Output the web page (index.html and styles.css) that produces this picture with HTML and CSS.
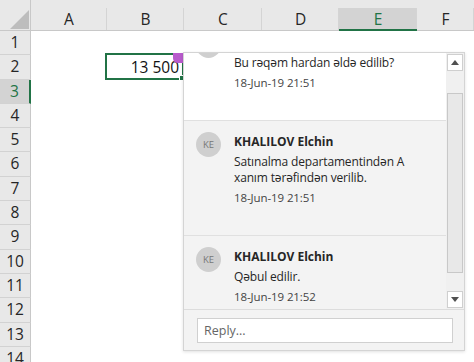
FILE: index.html
```html
<!DOCTYPE html>
<html lang="az">
<head>
<meta charset="UTF-8">
<title>Sheet comments</title>
<link rel="stylesheet" href="styles.css">
</head>
<body>

<div class="sheet">
    <div class="corner">
        <svg width="31" height="31" viewBox="0 0 31 31"><polygon points="29,10 29,29 10,29" fill="#bdbdbd"/></svg>
    </div>
    <div class="colhead">A</div>
    <div class="colhead">B</div>
    <div class="colhead">C</div>
    <div class="colhead">D</div>
    <div class="colhead active">E</div>
    <div class="colhead">F</div>

    <div class="rowhead">1</div><div class="cell"></div><div class="cell"></div><div class="cell"></div><div class="cell"></div><div class="cell"></div><div class="cell"></div>
    <div class="rowhead">2</div><div class="cell"></div><div class="cell value">13 500</div><div class="cell"></div><div class="cell"></div><div class="cell"></div><div class="cell"></div>
    <div class="rowhead active">3</div><div class="cell"></div><div class="cell"></div><div class="cell"></div><div class="cell"></div><div class="cell"></div><div class="cell"></div>
    <div class="rowhead">4</div><div class="cell"></div><div class="cell"></div><div class="cell"></div><div class="cell"></div><div class="cell"></div><div class="cell"></div>
    <div class="rowhead">5</div><div class="cell"></div><div class="cell"></div><div class="cell"></div><div class="cell"></div><div class="cell"></div><div class="cell"></div>
    <div class="rowhead">6</div><div class="cell"></div><div class="cell"></div><div class="cell"></div><div class="cell"></div><div class="cell"></div><div class="cell"></div>
    <div class="rowhead">7</div><div class="cell"></div><div class="cell"></div><div class="cell"></div><div class="cell"></div><div class="cell"></div><div class="cell"></div>
    <div class="rowhead">8</div><div class="cell"></div><div class="cell"></div><div class="cell"></div><div class="cell"></div><div class="cell"></div><div class="cell"></div>
    <div class="rowhead">9</div><div class="cell"></div><div class="cell"></div><div class="cell"></div><div class="cell"></div><div class="cell"></div><div class="cell"></div>
    <div class="rowhead">10</div><div class="cell"></div><div class="cell"></div><div class="cell"></div><div class="cell"></div><div class="cell"></div><div class="cell"></div>
    <div class="rowhead">11</div><div class="cell"></div><div class="cell"></div><div class="cell"></div><div class="cell"></div><div class="cell"></div><div class="cell"></div>
    <div class="rowhead">12</div><div class="cell"></div><div class="cell"></div><div class="cell"></div><div class="cell"></div><div class="cell"></div><div class="cell"></div>
    <div class="rowhead">13</div><div class="cell"></div><div class="cell"></div><div class="cell"></div><div class="cell"></div><div class="cell"></div><div class="cell"></div>
    <div class="rowhead">14</div><div class="cell"></div><div class="cell"></div><div class="cell"></div><div class="cell"></div><div class="cell"></div><div class="cell"></div>

    <!-- selected cell B2 -->
    <div class="selection"><span class="fill-handle"></span></div>
    <svg class="comment-flag" width="10" height="10" viewBox="0 0 10 10"><path d="M0 0 H10 V10 H5 Q0 10 0 5 Z" fill="#b85bcc"/></svg>

    <!-- threaded comment card -->
    <div class="thread">
        <div class="thread-body">
            <div class="comment-list">
                <div class="comment first">
                    <div class="avatar">KE</div>
                    <div class="comment-text">
                        <div class="author">KHALILOV Elchin</div>
                        <div class="message">Bu rəqəm hardan əldə edilib?</div>
                        <div class="date">18-Jun-19 21:51</div>
                    </div>
                </div>
                <div class="comment">
                    <div class="avatar">KE</div>
                    <div class="comment-text">
                        <div class="author">KHALILOV Elchin</div>
                        <div class="message">Satınalma departamentindən A<br>xanım tərəfindən verilib.</div>
                        <div class="date">18-Jun-19 21:51</div>
                    </div>
                </div>
                <div class="comment">
                    <div class="avatar">KE</div>
                    <div class="comment-text">
                        <div class="author">KHALILOV Elchin</div>
                        <div class="message">Qəbul edilir.</div>
                        <div class="date">18-Jun-19 21:52</div>
                    </div>
                </div>
            </div>
            <div class="scrollbar">
                <div class="scroll-btn">
                    <svg width="8" height="5" viewBox="0 0 8 5"><polygon points="4,0 8,5 0,5" fill="#505050"/></svg>
                </div>
                <div class="scroll-track"><div class="scroll-thumb"></div></div>
                <div class="scroll-btn">
                    <svg width="8" height="5" viewBox="0 0 8 5"><polygon points="0,0 8,0 4,5" fill="#505050"/></svg>
                </div>
            </div>
        </div>
        <div class="reply-bar">
            <input type="text" class="reply-input" placeholder="Reply...">
        </div>
    </div>
</div>

</body>
</html>
```

FILE: styles.css
```css
body {
    margin: 0;
    padding: 0;
    overflow: hidden;
    font-family: "Open Sans", "Noto Sans", sans-serif;
    color: #222;
    background: #fff;
}
.sheet {
    position: relative;
    display: grid;
    grid-template-columns: 31px 76px 77px 78px 77px 78px 57px;
    grid-template-rows: 31px repeat(14, 24.3px);
    width: 474px;
}
.corner {
    background: #e8e8e8;
    border-bottom: 1px solid #c8c8c8;
    border-right: 1px solid #c8c8c8;
    box-sizing: border-box;
    overflow: hidden;
}
.corner svg {
    display: block;
}
.colhead {
    background: #e8e8e8;
    border-top: 8px solid #e8e8e8;
    border-bottom: 1px solid #c8c8c8;
    box-shadow: inset -1px 0 0 #d4d4d4;
    box-sizing: border-box;
    font-size: 15.5px;
    line-height: 22px;
    text-align: center;
    color: #262626;
}
.colhead.active {
    background: #d3d3d3;
    border-bottom: 2px solid #217346;
    color: #217346;
}
.rowhead {
    background: #e8e8e8;
    border-bottom: 1px solid #d2d2d2;
    border-right: 1px solid #c8c8c8;
    box-sizing: border-box;
    font-size: 15.5px;
    line-height: 23px;
    text-align: center;
    color: #262626;
}
.rowhead.active {
    background: #d3d3d3;
    border-right: 2px solid #217346;
    color: #217346;
}
.cell {
    background: #fff;
}
.cell.value {
    font-size: 15.5px;
    line-height: 24px;
    text-align: right;
    padding-right: 5px;
    color: #111;
}
.selection {
    position: absolute;
    left: 105px;
    top: 53px;
    width: 79px;
    height: 27px;
    border: 2px solid #217346;
    box-sizing: border-box;
}
.fill-handle {
    position: absolute;
    right: -3px;
    bottom: -3px;
    width: 4px;
    height: 4px;
    background: #217346;
    border: 1px solid #fff;
}
.comment-flag {
    position: absolute;
    left: 173px;
    top: 53px;
}

/* comment card */
.thread {
    position: absolute;
    left: 183px;
    top: 52px;
    width: 282px;
    height: 299px;
    border: 1px solid #d4d4d4;
    box-sizing: border-box;
    background: #fff;
    box-shadow: 0 1px 3px rgba(0, 0, 0, 0.12);
    display: flex;
    flex-direction: column;
}
.thread-body {
    display: flex;
    height: 256px;
}
.comment-list {
    flex: 1;
    overflow: hidden;
}
.comment {
    display: flex;
    gap: 13px;
    padding: 11px 12px 28px 12px;
    background: #f3f3f3;
    border-bottom: 1px solid #e0e0e0;
}
.comment.first {
    margin-top: -31px;
    background: #fff;
}
.avatar {
    flex: none;
    width: 25px;
    height: 25px;
    border-radius: 50%;
    background: #cfcfcf;
    color: #777;
    font-size: 9.5px;
    line-height: 25px;
    text-align: center;
}
.author {
    font-size: 12px;
    font-weight: bold;
    line-height: 20px;
    color: #262626;
}
.message {
    margin-top: 2px;
    font-size: 12px;
    letter-spacing: -0.15px;
    line-height: 16px;
    color: #262626;
}
.date {
    margin-top: 2px;
    font-size: 11.5px;
    letter-spacing: -0.1px;
    line-height: 19px;
    color: #444;
}
.scrollbar {
    width: 18px;
    padding: 1px;
    box-sizing: border-box;
    background: #f0f0f0;
    display: flex;
    flex-direction: column;
}
.scroll-btn {
    height: 17px;
    background: #fff;
    border: 1px solid #cfcfcf;
    box-sizing: border-box;
    display: flex;
    align-items: center;
    justify-content: center;
}
.scroll-track {
    flex: 1;
    padding: 22px 0 18px;
}
.scroll-thumb {
    height: 100%;
    background: #e8e8e8;
    border: 1px solid #c8c8c8;
    box-sizing: border-box;
}
.reply-bar {
    flex: 1;
    background: #f3f3f3;
    border-top: 1px solid #dcdcdc;
    padding: 8px 11px 0 13px;
}
.reply-input {
    display: block;
    width: 100%;
    height: 25px;
    box-sizing: border-box;
    border: 1px solid #d0d0d0;
    background: #fff;
    padding: 0 6px;
    font-family: "Open Sans", "Noto Sans", sans-serif;
    font-size: 12.5px;
    outline: none;
}
.reply-input::placeholder {
    color: #666;
}
```
